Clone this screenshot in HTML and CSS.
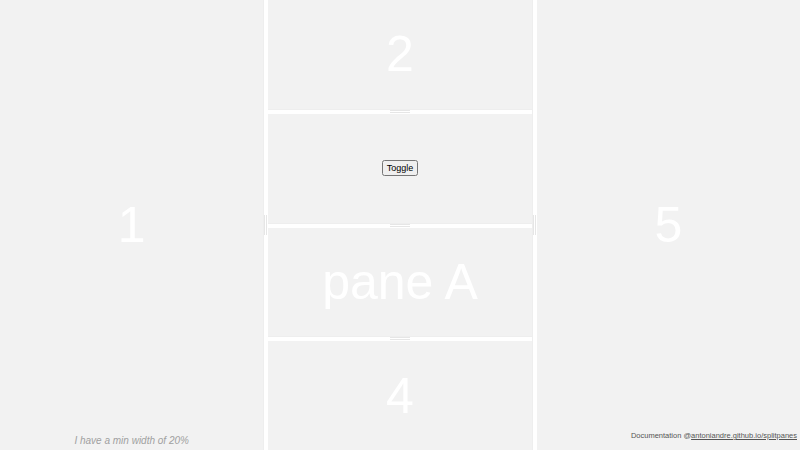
FILE: index.html
```
<!DOCTYPE html>
<html lang="en">
<head>
    <meta charset="UTF-8">
    <meta name="viewport" content="width=device-width, initial-scale=1.0">
    <title>Splitpanes</title>
    <link rel="stylesheet" href="styles.css">
</head>
<body>
    <!-- Main split: 3 columns -->
    <div class="splitpanes vertical">
        <div class="pane">
            <span>1</span>
            <em class="specs">I have a min width of 20%</em>
        </div>
        <div class="splitter"></div>

        <!-- Middle column split in rows -->
        <div class="pane">
            <div class="splitpanes horizontal">
                <div class="pane"><span>2</span></div>
                <div class="splitter"></div>
                <div class="pane"><button class="toggle">Toggle</button></div>
                <div class="splitter"></div>
                <div class="pane"><span>pane A</span></div>
                <div class="splitter"></div>
                <div class="pane"><span>4</span></div>
            </div>
        </div>
        <div class="splitter"></div>

        <div class="pane"><span>5</span></div>
    </div>

    <p class="doc">Documentation @<a href="#">antoniandre.github.io/splitpanes</a></p>
</body>
</html>
```

FILE: styles.css
```
/* Base */
html, body {
    margin: 0;
    padding: 0;
    height: 100%;
}

body {
    font-family: "Liberation Sans", Arial, sans-serif;
    background-color: #fff;
    position: relative;
    overflow: hidden;
}

/* Splitpanes */
.splitpanes {
    display: flex;
    width: 100%;
    height: 100%;
}

.splitpanes.vertical {
    flex-direction: row;
    height: 450px;
}

.splitpanes.horizontal {
    flex-direction: column;
}

.pane {
    flex: 1 1 0;
    min-width: 0;
    min-height: 0;
    position: relative;
    overflow: hidden;
    background-color: #f2f2f2;
    display: flex;
    align-items: center;
    justify-content: center;
    color: #fff;
    font-size: 50px;
}

.splitter {
    flex-shrink: 0;
    background-color: #fff;
    box-sizing: border-box;
    position: relative;
}

.splitter:before,
.splitter:after {
    content: "";
    position: absolute;
    top: 50%;
    left: 50%;
    background-color: #e6e6e6;
}

.vertical > .splitter {
    width: 5px;
    border-left: 1px solid #eee;
}

.vertical > .splitter:before,
.vertical > .splitter:after {
    transform: translateY(-50%);
    width: 1px;
    height: 20px;
}

.vertical > .splitter:before {
    margin-left: -2px;
}

.vertical > .splitter:after {
    margin-left: 0;
}

.horizontal > .splitter {
    height: 5px;
    border-top: 1px solid #eee;
}

.horizontal > .splitter:before,
.horizontal > .splitter:after {
    transform: translateX(-50%);
    width: 20px;
    height: 1px;
}

.horizontal > .splitter:before {
    margin-top: -2px;
}

.horizontal > .splitter:after {
    margin-top: 0;
}

/* Middle column holds nested panes */
.vertical > .pane:nth-child(3) {
    display: block;
    background: none;
}

.toggle {
    font-family: "Liberation Sans", Arial, sans-serif;
    font-size: 9px;
    padding: 1px 3px;
}

/* Texts */
.specs {
    position: absolute;
    left: 0;
    right: 0;
    bottom: 4px;
    text-align: center;
    font-size: 10px;
    color: #a0a0a0;
}

.doc {
    position: absolute;
    right: 3px;
    bottom: 10px;
    margin: 0;
    font-size: 7.5px;
    color: #555;
}

.doc a {
    color: #555;
}
```
